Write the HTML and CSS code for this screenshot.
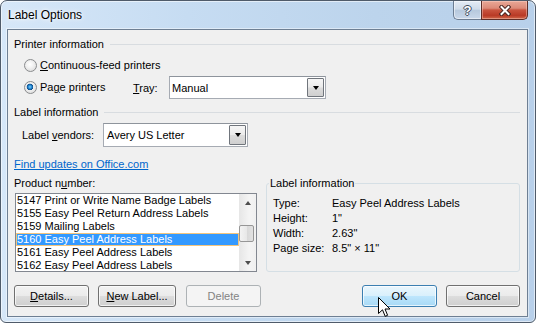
FILE: index.html
```html
<!DOCTYPE html>
<html>
<head>
<meta charset="utf-8">
<link rel="stylesheet" href="styles.css">
</head>
<body>
<div class="window">
  <div class="titlebar">
    <span class="title">Label Options</span>
    <div class="caption">
      <span class="cbtn help">?</span>
      <span class="cbtn close">
        <svg width="12" height="11" viewBox="0 0 12 11">
          <path d="M2.5 2 L9.5 9 M9.5 2 L2.5 9" stroke="#4a2520" stroke-width="4" stroke-linecap="square" fill="none"/>
          <path d="M2.5 2 L9.5 9 M9.5 2 L2.5 9" stroke="#ffffff" stroke-width="2" stroke-linecap="square" fill="none"/>
        </svg>
      </span>
    </div>
  </div>
  <div class="client">
    <div class="group-head head1"><span>Printer information</span><i class="rule"></i></div>
    <div class="row radio-row r1"><span class="radio"></span><span class="rlabel"><u>C</u>ontinuous-feed printers</span></div>
    <div class="row r2">
      <span class="radio checked"></span><span class="rlabel pp">Pa<u>g</u>e printers</span>
      <span class="tray-label"><u>T</u>ray:</span>
      <div class="combo tray"><span class="val">Manual</span><span class="drop"></span></div>
    </div>
    <div class="group-head head2"><span>Label information</span><i class="rule"></i></div>
    <div class="row vendor">
      <span class="vlabel">Label <u>v</u>endors:</span>
      <div class="combo vcombo"><span class="val">Avery US Letter</span><span class="drop"></span></div>
    </div>
    <a class="link">Find updates on Office.com</a>
    <div class="lower">
      <div class="prod">
        <div class="prod-label">Product n<u>u</u>mber:</div>
        <div class="listbox">
          <ul class="items">
            <li>5147 Print or Write Name Badge Labels</li>
            <li>5155 Easy Peel Return Address Labels</li>
            <li>5159 Mailing Labels</li>
            <li class="sel">5160 Easy Peel Address Labels</li>
            <li>5161 Easy Peel Address Labels</li>
            <li>5162 Easy Peel Address Labels</li>
          </ul>
          <div class="scrollbar">
            <span class="sb-btn"><i class="tri up"></i></span>
            <span class="track"><span class="thumb"></span></span>
            <span class="sb-btn"><i class="tri down"></i></span>
          </div>
        </div>
      </div>
      <fieldset class="info">
        <legend>Label information</legend>
        <div class="info-grid">
          <span>Type:</span><span>Easy Peel Address Labels</span>
          <span>Height:</span><span>1&quot;</span>
          <span>Width:</span><span>2.63&quot;</span>
          <span>Page size:</span><span>8.5&quot; × 11&quot;</span>
        </div>
      </fieldset>
    </div>
    <div class="buttons">
      <span class="btn details"><u>D</u>etails...</span>
      <span class="btn newlabel"><u>N</u>ew Label...</span>
      <span class="btn disabled delete">Delete</span>
      <span class="btn ok">OK</span>
      <span class="btn cancel">Cancel</span>
    </div>
  </div>
  <svg class="cursor" width="14" height="22" viewBox="0 0 14 22">
    <path d="M0.5 0.5 L0.5 16.5 L4.5 12.8 L7.2 19.3 L9.6 18.3 L7 12 L12 12 Z" fill="#fff" stroke="#000" stroke-width="1" stroke-linejoin="miter"/>
  </svg>
</div>
</body>
</html>
```

FILE: styles.css
```css
html, body {
  margin: 0;
  background: #ffffff;
}
body {
  font-family: "Liberation Sans", Arial, sans-serif;
  font-size: 11px;
  color: #000;
}
.window {
  position: relative;
  width: 536px;
  height: 323px;
  box-sizing: border-box;
  border: 1px solid #4f5b6a;
  border-radius: 7px 7px 6px 6px;
  padding: 0 7px 5px 6px;
  background: linear-gradient(to right, #d6e7f8 0%, #c6dcf2 35%, #bcd4ec 70%, #b8d0ea 100%);
  box-shadow: inset 0 0 0 1px rgba(255,255,255,0.55);
  display: flex;
  flex-direction: column;
}
.titlebar {
  height: 28px;
  display: flex;
  align-items: flex-start;
}
.title {
  margin-top: 7px;
  padding-left: 1px;
  font-size: 12px;
  line-height: 15px;
  color: #000;
  text-shadow: 0 0 6px #fff, 0 0 3px #fff;
}
.caption {
  margin-left: auto;
  display: flex;
  height: 19px;
}
.cbtn {
  box-sizing: border-box;
  height: 19px;
  display: flex;
  align-items: center;
  justify-content: center;
}
.help {
  width: 28px;
  border: 1px solid #6c7d92;
  border-top: none;
  border-right: none;
  border-radius: 0 0 0 5px;
  background: linear-gradient(to bottom, #e4ecf6 0%, #d0dcea 45%, #b7c9dd 52%, #c9d8ea 100%);
  box-shadow: inset 0 0 0 1px rgba(255,255,255,0.5);
  color: #fff;
  font-weight: bold;
  font-size: 13px;
  line-height: 13px;
  text-shadow: 1px 0 #3f4d5e, -1px 0 #3f4d5e, 0 1px #3f4d5e, 0 -1px #3f4d5e;
}
.close {
  width: 47px;
  border: 1px solid #5e2e28;
  border-top: none;
  border-radius: 0 0 5px 0;
  background: linear-gradient(to bottom, #e9a897 0%, #dc8a78 40%, #c9543f 50%, #b93a26 80%, #d0684c 100%);
  box-shadow: inset 0 0 0 1px rgba(255,220,210,0.4);
}
.client {
  flex: 1;
  box-sizing: border-box;
  border: 1px solid #6e7f93;
  box-shadow: 0 0 0 1px rgba(255,255,255,0.45);
  background: #f0f0f0;
  padding: 0 7px 0 6px;
  display: flex;
  flex-direction: column;
}
.group-head {
  display: flex;
  align-items: center;
  height: 15px;
  line-height: 15px;
  white-space: nowrap;
}
.group-head .rule {
  flex: 1;
  margin-left: 6px;
  border-top: 1px solid #d8dce0;
}
.head1 { margin-top: 7px; }
.head2 { margin-top: 6px; }
.row {
  display: flex;
  align-items: center;
  white-space: nowrap;
}
.r1 {
  margin-top: 5px;
  height: 16px;
  padding-left: 10px;
}
.r2 {
  margin-top: 3px;
  height: 23px;
  padding-left: 10px;
}
.radio {
  width: 13px;
  height: 13px;
  box-sizing: border-box;
  border-radius: 50%;
  border: 1px solid #8a8c8e;
  background: radial-gradient(circle at 45% 40%, #ffffff 0%, #f1f1f1 40%, #d4d4d4 100%);
  flex: none;
}
.radio.checked {
  background:
    radial-gradient(circle at 45% 45%, #7fd0ff 0, #2a8fd6 1.6px, #0f4f8f 3px, rgba(15,79,143,0) 3.6px),
    radial-gradient(circle at 45% 40%, #ffffff 0%, #f1f1f1 40%, #d4d4d4 100%);
}
.rlabel {
  margin-left: 3px;
  line-height: 15px;
}
.pp { width: 93px; }
.tray-label { width: 36px; }
.combo {
  box-sizing: border-box;
  display: flex;
  align-items: stretch;
  border: 1px solid #a6abb3;
  border-top-color: #8e949c;
  background: #fff;
}
.combo .val {
  flex: 1;
  display: flex;
  align-items: center;
  padding-left: 2px;
}
.tray {
  width: 157px;
  height: 23px;
}
.drop {
  width: 17px;
  margin: 1px;
  box-sizing: border-box;
  border: 1px solid #70757c;
  border-radius: 1px;
  background: linear-gradient(to bottom, #f6f6f6 0%, #ebebeb 48%, #dcdcdc 52%, #cfcfcf 100%);
  display: flex;
  align-items: center;
  justify-content: center;
}
.drop::before {
  content: "";
  border-top: 4px solid #000;
  border-left: 3.5px solid transparent;
  border-right: 3.5px solid transparent;
}
.vendor {
  margin-top: 3px;
  height: 24px;
  padding-left: 8px;
}
.vlabel { width: 81px; }
.vcombo {
  width: 145px;
  height: 24px;
}
.vcombo .val { padding-left: 3px; }
.link {
  margin-top: 10px;
  align-self: flex-start;
  line-height: 15px;
  color: #0066cc;
  text-decoration: underline;
}
.lower {
  margin-top: 4px;
  height: 96px;
  display: flex;
}
.prod {
  width: 243px;
  display: flex;
  flex-direction: column;
}
.prod-label {
  height: 15px;
  line-height: 15px;
}
.listbox {
  margin-top: 2px;
  margin-left: 1px;
  height: 79px;
  box-sizing: border-box;
  border: 1px solid #828790;
  background: #fff;
  display: flex;
}
.items {
  list-style: none;
  margin: 0;
  padding: 0;
  flex: 1;
  overflow: hidden;
}
.items li {
  height: 13px;
  line-height: 13px;
  padding-left: 1px;
  white-space: nowrap;
}
.items li.sel {
  background: #3399ff;
  color: #fff;
  box-shadow: inset 0 0 0 1px #f3c57d;
}
.scrollbar {
  width: 17px;
  display: flex;
  flex-direction: column;
  background: linear-gradient(to right, #e6e6e6, #f4f4f4 60%, #f0f0f0);
}
.sb-btn {
  height: 17px;
  display: flex;
  align-items: center;
  justify-content: center;
}
.tri.up {
  border-bottom: 4px solid #4d4d4d;
  border-left: 3.5px solid transparent;
  border-right: 3.5px solid transparent;
}
.tri.down {
  border-top: 4px solid #4d4d4d;
  border-left: 3.5px solid transparent;
  border-right: 3.5px solid transparent;
}
.track {
  flex: 1;
  padding-top: 14px;
}
.thumb {
  display: block;
  box-sizing: border-box;
  width: 15px;
  height: 17px;
  border: 1px solid #969696;
  border-radius: 2px;
  background: linear-gradient(to right, #f3f3f3 0%, #e8e8e8 50%, #d8d8d8 51%, #e2e2e2 100%);
}
.info {
  margin: 0 0 0 9px;
  padding: 0;
  width: 254px;
  height: 96px;
  box-sizing: border-box;
  border: 1px solid #d5dfe5;
  border-radius: 3px;
  min-width: 0;
}
.info legend {
  margin-left: 2px;
  padding: 0 1px;
  line-height: 15px;
}
.info-grid {
  display: grid;
  grid-template-columns: 59px auto;
  grid-auto-rows: 15px;
  line-height: 15px;
  padding: 5px 0 0 6px;
}
.buttons {
  margin-top: 13px;
  display: flex;
}
.btn {
  box-sizing: border-box;
  height: 22px;
  width: 75px;
  border: 1px solid #707070;
  border-radius: 3px;
  background: linear-gradient(to bottom, #f2f2f2 0%, #ebebeb 49%, #dddddd 50%, #cfcfcf 100%);
  box-shadow: inset 0 0 0 1px rgba(255,255,255,0.7);
  display: flex;
  align-items: center;
  justify-content: center;
  white-space: nowrap;
}
.newlabel {
  width: 78px;
  margin-left: 9px;
}
.delete {
  margin-left: 10px;
}
.btn.disabled {
  border-color: #adb2b5;
  background: #f4f4f4;
  box-shadow: none;
  color: #838383;
}
.ok {
  margin-left: auto;
  border-color: #3c7fb1;
  background: linear-gradient(to bottom, #eaf6fd 0%, #d9f0fc 49%, #bee6fd 50%, #a7d9f5 100%);
}
.cancel {
  margin-left: 9px;
  width: 74px;
}
.cursor {
  position: absolute;
  left: 377px;
  top: 296px;
}
```
